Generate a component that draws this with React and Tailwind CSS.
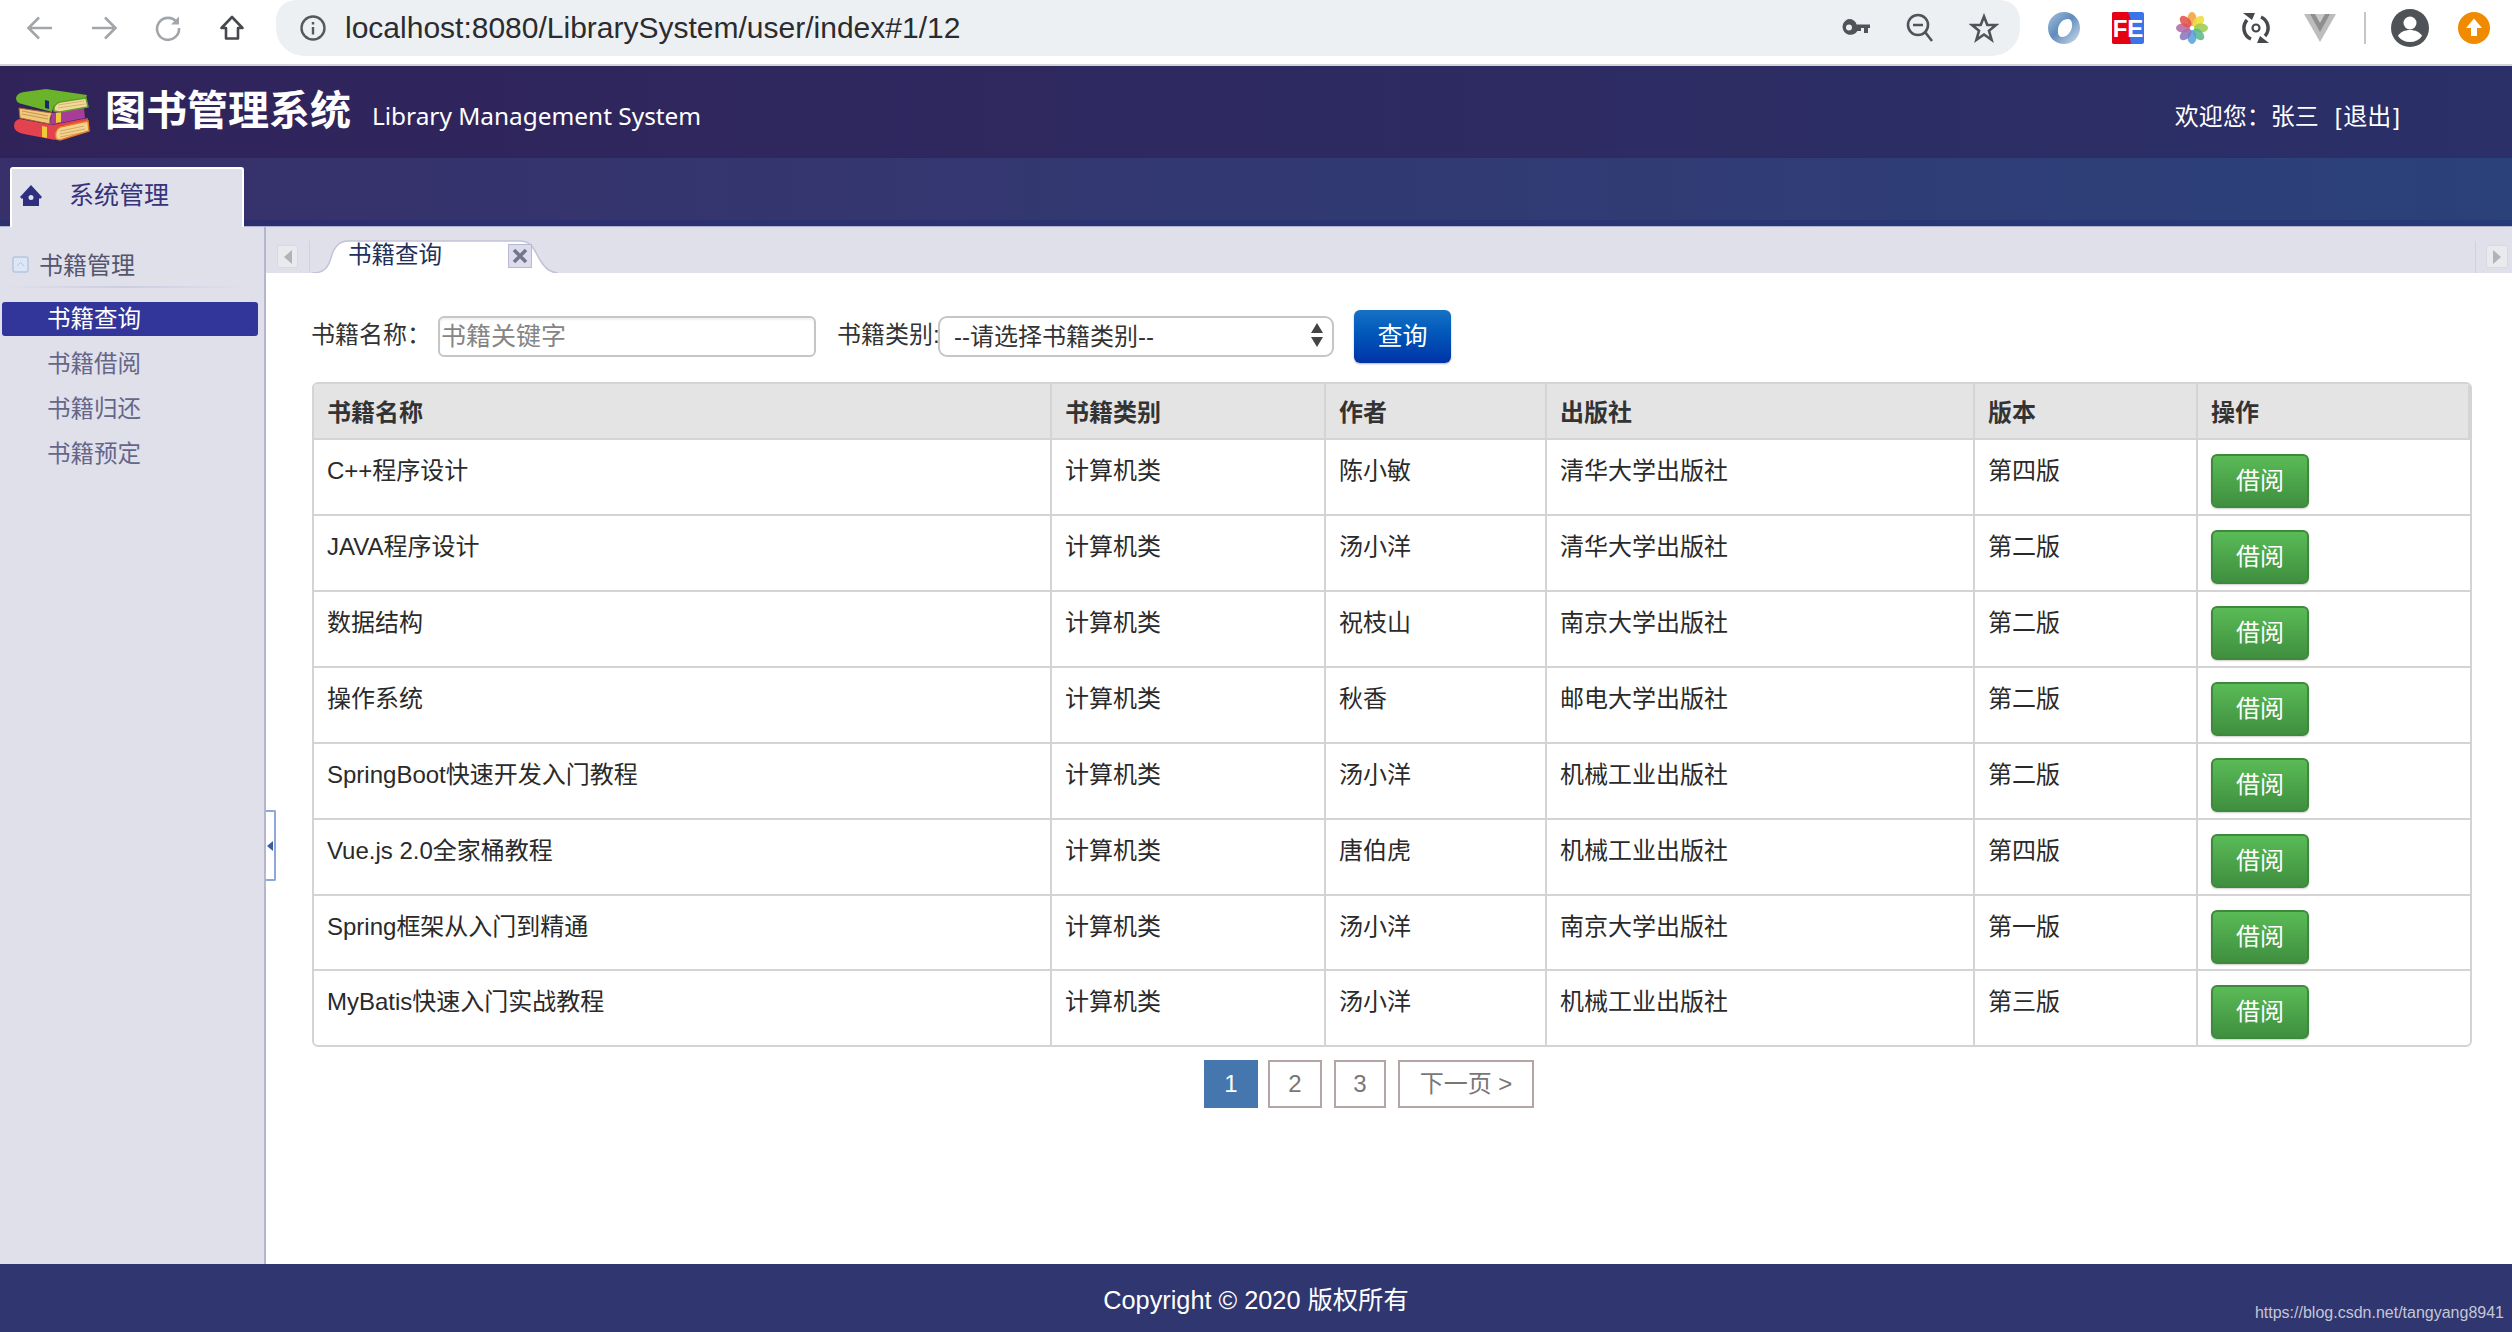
import { useState } from 'react';

const books = [
  { name: 'C++程序设计', type: '计算机类', author: '陈小敏', press: '清华大学出版社', edition: '第四版' },
  { name: 'JAVA程序设计', type: '计算机类', author: '汤小洋', press: '清华大学出版社', edition: '第二版' },
  { name: '数据结构', type: '计算机类', author: '祝枝山', press: '南京大学出版社', edition: '第二版' },
  { name: '操作系统', type: '计算机类', author: '秋香', press: '邮电大学出版社', edition: '第二版' },
  { name: 'SpringBoot快速开发入门教程', type: '计算机类', author: '汤小洋', press: '机械工业出版社', edition: '第二版' },
  { name: 'Vue.js 2.0全家桶教程', type: '计算机类', author: '唐伯虎', press: '机械工业出版社', edition: '第四版' },
  { name: 'Spring框架从入门到精通', type: '计算机类', author: '汤小洋', press: '南京大学出版社', edition: '第一版' },
  { name: 'MyBatis快速入门实战教程', type: '计算机类', author: '汤小洋', press: '机械工业出版社', edition: '第三版' },
];

const menu = ['书籍查询', '书籍借阅', '书籍归还', '书籍预定'];

function ToolIcon({ children }) {
  return <div className="flex h-[56px] w-[64px] shrink-0 items-center justify-center">{children}</div>;
}

function BrowserBar() {
  return (
    <div className="flex h-[66px] shrink-0 items-start border-b-2 border-[#d2d4d8] bg-white pl-[8px]">
      <ToolIcon>
        <svg width="28" height="28" viewBox="0 0 28 28" fill="none" stroke="#a2a6aa" strokeWidth="2.6">
          <path d="M26 14H3M13 3.500 2.500 14 13 24.500" />
        </svg>
      </ToolIcon>
      <ToolIcon>
        <svg width="28" height="28" viewBox="0 0 28 28" fill="none" stroke="#a2a6aa" strokeWidth="2.6">
          <path d="M2 14h23M15 3.500 25.500 14 15 24.500" />
        </svg>
      </ToolIcon>
      <ToolIcon>
        <svg width="28" height="28" viewBox="0 0 28 28" fill="none" stroke="#a2a6aa" strokeWidth="2.6">
          <path d="M23 8.500A11 11 0 1 0 25 14" />
          <path d="M25 2.500V10.500H17Z" fill="#a2a6aa" stroke="none" />
        </svg>
      </ToolIcon>
      <ToolIcon>
        <svg width="28" height="28" viewBox="0 0 28 28" fill="none" stroke="#45484c" strokeWidth="2.6" strokeLinejoin="round">
          <path d="M14 3 3.500 14H8v10.500h12V14h4.500Z" />
        </svg>
      </ToolIcon>

      <div className="ml-[12px] flex h-[56px] w-[1744px] shrink-0 items-center rounded-t-[20px] rounded-b-[28px] bg-[#edf0f2] pl-[24px] pr-[4px]">
        <svg width="26" height="26" viewBox="0 0 26 26" fill="none" stroke="#55585c" strokeWidth="2.4">
          <circle cx="13" cy="13" r="11.500" />
          <path d="M13 12v7.500M13 7v2.500" />
        </svg>
        <span className="ml-[19px] text-[30px] leading-none text-[#2a2c30]">localhost:8080/LibrarySystem/user/index#1/12</span>
        <div className="ml-auto flex">
          <ToolIcon>
            <svg width="30" height="18" viewBox="0 0 30 18" fill="#505357">
              <path fillRule="evenodd" d="M8 0a8 8 0 0 1 7.600 5.500H29V9h-2v5h-4V9h-3v3h-3.600A8 8 0 1 1 8 0Zm0 5.500a3 3 0 1 0 0 6 3 3 0 0 0 0-6Z" />
            </svg>
          </ToolIcon>
          <ToolIcon>
            <svg width="28" height="30" viewBox="0 0 28 30" fill="none" stroke="#505357" strokeWidth="2.600">
              <circle cx="12" cy="12" r="10" />
              <path d="M7 12h10M19 19l7 9" />
            </svg>
          </ToolIcon>
          <ToolIcon>
            <svg width="30" height="30" viewBox="0 0 30 30" fill="none" stroke="#505357" strokeWidth="2.600" strokeLinejoin="miter">
              <path d="M15 3.500 18.300 12H27l-7 5.800 2.600 9L15 21.500 7.400 26.800l2.600-9L3 12h8.700Z" />
            </svg>
          </ToolIcon>
        </div>
      </div>

      <div className="ml-[12px] flex items-center">
        <ToolIcon>
          <svg width="34" height="34" viewBox="0 0 34 34">
            <defs>
              <linearGradient id="ringFill" x1="0" y1="0" x2="1" y2="1">
                <stop offset="0" stopColor="#a9c2dc" />
                <stop offset="0.45" stopColor="#5f8cbc" />
                <stop offset="1" stopColor="#d3deea" />
              </linearGradient>
            </defs>
            <path fillRule="evenodd" fill="url(#ringFill)" d="M17 1c9 0 16 7 16 16s-7 16-16 16S1 26 1 17 8 1 17 1Zm4 7c-5 0-9 4-10 10-.500 5 1 8 4 8 5 0 9-5 10-10 .500-5-1-8-4-8Z" />
          </svg>
        </ToolIcon>
        <ToolIcon>
          <svg width="32" height="32" viewBox="0 0 32 32">
            <rect width="32" height="32" rx="2" fill="#3a74e8" />
            <path d="M2 0h14c3 6 3 11 2 16-1 6 0 11 1 16H2a2 2 0 0 1-2-2V2a2 2 0 0 1 2-2Z" fill="#e60012" />
            <text x="16" y="25" textAnchor="middle" fontFamily="Liberation Sans" fontWeight="700" fontSize="24" fill="#fff">FE</text>
          </svg>
        </ToolIcon>
        <ToolIcon>
          <svg width="32" height="32" viewBox="-16 -16 32 32">
            {['#f4a13c', '#eddc3c', '#9ccc50', '#5fb98a', '#5aa2dc', '#8a78c0', '#b56aa6', '#e2534a'].map((c, i) => (
              <ellipse key={c} cx="0" cy="-9" rx="4.500" ry="7" fill={c} fillOpacity="0.88" transform={`rotate(${i * 45})`} />
            ))}
            <circle r="1.500" fill="#fff" />
          </svg>
        </ToolIcon>
        <ToolIcon>
          <svg width="32" height="32" viewBox="0 0 32 32" fill="none" stroke="#46494c" strokeWidth="3.500">
            <path d="M7 8a12 12 0 0 0 4 19" />
            <path d="M25 24a12 12 0 0 0-4-19" />
            <path d="M3 1h12l-3 7Z" fill="#46494c" stroke="none" />
            <path d="M29 31H17l3-7Z" fill="#46494c" stroke="none" />
            <circle cx="16" cy="16" r="3.500" strokeWidth="2.200" />
          </svg>
        </ToolIcon>
        <ToolIcon>
          <svg width="32" height="28" viewBox="0 0 32 28">
            <path d="M0 0h32L16 28Z" fill="#bdbdbd" />
            <path d="M6 0h20L16 18Z" fill="#8f8f8f" />
            <path d="M11 0h10l-5 9Z" fill="#c9c9c9" />
          </svg>
        </ToolIcon>
        <div className="ml-[12px] h-[32px] w-[2px] bg-[#c4c6c8]" />
        <div className="ml-[12px]">
          <ToolIcon>
            <svg width="38" height="38" viewBox="0 0 38 38">
              <circle cx="19" cy="19" r="19" fill="#4f5256" />
              <circle cx="19" cy="14" r="6.500" fill="#fff" />
              <path d="M7 27c2-4 7-6 12-6s10 2 12 6c-3 4-7 6-12 6s-9-2-12-6Z" fill="#fff" />
            </svg>
          </ToolIcon>
        </div>
        <ToolIcon>
          <svg width="32" height="32" viewBox="0 0 32 32">
            <circle cx="16" cy="16" r="16" fill="#f08a00" />
            <path d="M16 6.500 24 16h-5v8h-6v-8H8Z" fill="#fff" />
          </svg>
        </ToolIcon>
      </div>
    </div>
  );
}

function BookLogo() {
  return (
    <svg width="80" height="58" viewBox="12 6 80 58">
      <path d="M14 46q0-6 6-7l32 6 36-7v4L60 46q-6 2-5 14L24 54q-10-2-10-8Z" fill="#e2434f" />
      <path d="M42 46l5 1v11l-5-1Z" fill="#f2c83a" />
      <path d="M56 59q-2-9 4-12l28-6 1 10-29 9Z" fill="#f2d48f" stroke="#e87a22" strokeWidth="1.500" />
      <path d="M60 51l24-5M60 54l25-5M60 57l25-5" stroke="#c9954e" strokeWidth="0.700" />
      <path d="M52 33l32-5 1 10-35 7Z" fill="#a83d98" />
      <path d="M56 33l5-1v10l-5 1Z" fill="#f2c83a" />
      <path d="M19 28l33 5q-3 5-2 11L20 38Z" fill="#f0c878" stroke="#a8643a" strokeWidth="1" />
      <path d="M22 31l26 5M22 34l26 5" stroke="#b5804a" strokeWidth="0.700" />
      <path d="M16 18q1-5 8-6l22-3 41 6-1 3-26 4q-7 2-8 10L22 24q-6-1-6-6Z" fill="#6cb32c" />
      <path d="M45 20l4 1v8l-4-1Z" fill="#1a2a66" />
      <path d="M54 31q-1-7 6-9l26-4 2 9-28 5Z" fill="#f1d99a" stroke="#5f9e28" strokeWidth="1.500" />
      <path d="M58 25l26-4M58 28l27-4" stroke="#c9a560" strokeWidth="0.700" />
    </svg>
  );
}

function Header() {
  return (
    <div className="flex h-[92px] shrink-0 items-start bg-linear-to-r from-[#30235a] to-[#2b3068] pl-[12px] pt-[20px] text-white">
      <BookLogo />
      <span className="ml-[13px] mt-[-1px] text-[41px] font-bold leading-[52px]">图书管理系统</span>
      <span className="ml-[21px] font-['Noto_Sans',sans-serif] text-[24.400px] leading-[60px]">Library Management System</span>
      <div className="ml-auto mr-[112px] mt-[15px] text-[24px] leading-[32px]">
        欢迎您：张三<span className="ml-[16px]">[</span><span className="mx-[2px]">退出</span>]
      </div>
    </div>
  );
}

function NavBar() {
  return (
    <div className="flex h-[69px] shrink-0 items-end border-b border-[#aeb2cc] bg-linear-to-r from-[#37306a] to-[#2b417a] pl-[10px] shadow-[inset_0_-6px_0_rgba(28,40,120,0.3)]">
      <div className="relative top-px flex h-[60px] w-[234px] items-center rounded-t-[3px] border-x-2 border-t-2 border-white bg-[#e0e0eb] pb-[4px] pl-[7px] text-[#35337a]">
        <svg width="24" height="24" viewBox="0 0 24 24" fill="#2f2f80">
          <path fillRule="evenodd" d="M12 1 23 13l-2 2-1-1v8H4v-8l-1 1-2-2Zm0 10a2.500 2.500 0 1 0 0 5 2.500 2.500 0 0 0 0-5Z" />
        </svg>
        <span className="ml-[26px] text-[25px]">系统管理</span>
      </div>
    </div>
  );
}

function Sidebar() {
  const [active, setActive] = useState(0);
  return (
    <aside className="w-[266px] shrink-0 border-r-2 border-[#b4b6d0] bg-[#e0e0eb] pt-[21px]">
      <div className="flex h-[32px] items-center pl-[12px]">
        <svg width="17" height="17" viewBox="0 0 17 17" fill="#dce6f4" stroke="#b4c6e0" strokeWidth="1.500">
          <rect x="1" y="1" width="15" height="15" rx="2" />
          <path d="M5 10l3.500-3.500L12 10" fill="none" strokeWidth="1" />
        </svg>
        <span className="ml-[10px] pt-[3px] text-[24px] text-[#55556e]">书籍管理</span>
      </div>
      <div className="ml-[5px] mt-[6px] h-[2px] w-[240px] bg-linear-to-r from-transparent via-[#cbcde2] to-transparent" />
      <ul className="mt-[14px]">
        {menu.map((m, i) => (
          <li
            key={m}
            onClick={() => setActive(i)}
            className={`mb-[11px] ml-[2px] flex h-[34px] w-[256px] cursor-pointer items-center rounded-[3px] pl-[45px] pt-[2px] text-[23.500px] ${
              active === i ? 'bg-[#32359a] text-white' : 'text-[#66668a]'
            }`}
          >
            {m}
          </li>
        ))}
      </ul>
    </aside>
  );
}

function TabStrip() {
  return (
    <div className="flex h-[46px] shrink-0 items-end bg-[#e0e0eb]">
      <div className="mb-[5px] ml-[11px] flex h-[23px] w-[21px] items-center justify-center rounded-[2px] border border-[#d8d8e0] bg-[#e9e9ee]">
        <svg width="8" height="14" viewBox="0 0 8 14" fill="#b2b2ba"><path d="M8 0v14L0 7Z" /></svg>
      </div>
      <div className="ml-[11px] h-[32px] w-px bg-[#d0d0de]" />
      <div className="relative ml-[2px] flex h-[33px] w-[246px] items-center">
        <svg className="absolute inset-0" width="246" height="33" viewBox="0 0 246 33">
          <path d="M0 33c12 0 16-5 19-15C22 6 28 1 36 1h172c12 0 14 9 20 19 6 10 12 13 18 13Z" fill="#fff" />
          <path d="M0 33c12 0 16-5 19-15C22 6 28 1 36 1h172c12 0 14 9 20 19 6 10 12 13 18 13" fill="none" stroke="#c2c2da" strokeWidth="1.500" />
        </svg>
        <span className="relative ml-[36px] pb-[1px] text-[23.500px] text-[#22305a]">书籍查询</span>
        <div className="relative mb-[2px] ml-auto mr-[26px] flex h-[24px] w-[24px] items-center justify-center border border-[#b8b8d4] bg-[#dcdcec]">
          <svg width="16" height="16" viewBox="0 0 16 16" stroke="#74748c" strokeWidth="3.500"><path d="M2 2l12 12M14 2 2 14" /></svg>
        </div>
      </div>
      <div className="ml-auto h-[32px] w-px bg-[#d0d0de]" />
      <div className="mb-[5px] ml-[10px] mr-[4px] flex h-[23px] w-[22px] items-center justify-center rounded-[2px] border border-[#d8d8e0] bg-[#e9e9ee]">
        <svg width="8" height="14" viewBox="0 0 8 14" fill="#b2b2ba"><path d="M0 0v14l8-7Z" /></svg>
      </div>
    </div>
  );
}

function SearchBar() {
  return (
    <div className="flex h-[53px] items-center text-[24px] text-[#333]">
      <label className="-ml-px w-[121px] whitespace-nowrap pb-[4px]">书籍名称：</label>
      <input
        placeholder="书籍关键字"
        className="ml-[6px] h-[41px] w-[378px] rounded-[6px] border-2 border-[#c6c6c6] pl-[1px] text-[25px] shadow-[inset_0_2px_2px_rgba(0,0,0,0.06)] outline-none placeholder:text-[#858585]"
      />
      <label className="ml-[21px] w-[101px] whitespace-nowrap pb-[4px]">书籍类别:</label>
      <div className="relative">
        <select className="h-[41px] w-[396px] appearance-none rounded-[9px] border-2 border-[#c6c6c6] bg-white pl-[14px] text-[24px] text-[#333] outline-none">
          <option>--请选择书籍类别--</option>
        </select>
        <svg className="absolute right-[11px] top-[7px]" width="12" height="24" viewBox="0 0 12 24" fill="#444">
          <path d="M6 0l6 10H0ZM6 24 0 14h12Z" />
        </svg>
      </div>
      <button className="ml-[20px] h-[53px] w-[97px] rounded-[6px] bg-linear-to-b from-[#1672c6] to-[#0032a8] text-[25px] text-white shadow-[0_1px_2px_rgba(0,0,0,0.3)]">
        查询
      </button>
    </div>
  );
}

function BookTable() {
  const th = 'border-r-2 border-[#d4d4d4] pl-[13px] pt-[3px] text-left align-middle text-[24px] font-bold text-[#333]';
  const td = 'border-r-2 border-[#d4d4d4] pl-[13px] pt-[15px] align-top text-[24px] leading-[32px] text-[#2a2a2a]';
  const rowHeight = i => (i < 6 ? 'h-[76px]' : i === 6 ? 'h-[75px]' : 'h-[74px]');
  return (
    <div className="mt-[19px] w-[2160px] overflow-hidden rounded-[6px] border-2 border-[#d4d4d4]">
      <table className="w-full table-fixed border-separate border-spacing-0">
        <colgroup>
          <col className="w-[738px]" />
          <col className="w-[274px]" />
          <col className="w-[221px]" />
          <col className="w-[428px]" />
          <col className="w-[223px]" />
          <col className="w-[272px]" />
        </colgroup>
        <thead>
          <tr className="h-[56px] bg-[#e4e4e4]">
            <th className={`${th} border-b-2`}>书籍名称</th>
            <th className={`${th} border-b-2`}>书籍类别</th>
            <th className={`${th} border-b-2`}>作者</th>
            <th className={`${th} border-b-2`}>出版社</th>
            <th className={`${th} border-b-2`}>版本</th>
            <th className={`${th} border-b-2 border-r-0`}>操作</th>
          </tr>
        </thead>
        <tbody>
          {books.map((b, i) => {
            const line = i < books.length - 1 ? 'border-b-2' : '';
            return (
              <tr key={b.name} className={rowHeight(i)}>
                <td className={`${td} ${line}`}>{b.name}</td>
                <td className={`${td} ${line}`}>{b.type}</td>
                <td className={`${td} ${line}`}>{b.author}</td>
                <td className={`${td} ${line}`}>{b.press}</td>
                <td className={`${td} ${line}`}>{b.edition}</td>
                <td className={`${line} border-[#d4d4d4] pl-[13px] pt-[14px] align-top`}>
                  <button className="h-[54px] w-[98px] rounded-[6px] border-2 border-[#3d8a3d] bg-linear-to-b from-[#5abb56] to-[#3f8f3f] text-[24px] text-white shadow-[0_1px_2px_rgba(0,0,0,0.2)]">
                    借阅
                  </button>
                </td>
              </tr>
            );
          })}
        </tbody>
      </table>
    </div>
  );
}

function Pagination() {
  const page = 'flex h-[48px] items-center justify-center border-2 border-[#b5a5a5] text-[24px] text-[#777]';
  return (
    <div className="mt-[13px] flex justify-center pr-[86px]">
      <span className="flex h-[48px] w-[54px] items-center justify-center bg-[#4577ae] text-[24px] text-white">1</span>
      <span className={`${page} ml-[10px] w-[54px]`}>2</span>
      <span className={`${page} ml-[12px] w-[52px]`}>3</span>
      <span className={`${page} ml-[12px] w-[136px]`}>下一页 &gt;</span>
    </div>
  );
}

export default function App() {
  return (
    <div className="flex h-screen w-full flex-col overflow-hidden bg-white font-['Liberation_Sans','Noto_Sans_CJK_SC',sans-serif]">
      <BrowserBar />
      <Header />
      <NavBar />
      <div className="flex min-h-0 flex-1">
        <Sidebar />
        <main className="relative flex min-w-0 flex-1 flex-col">
          <TabStrip />
          <div className="absolute left-0 top-[583px] flex h-[71px] w-[10px] items-center rounded-r-[2px] border-y-2 border-r-2 border-[#8fa8d8] bg-white">
            <svg width="6" height="10" viewBox="0 0 6 10" fill="#3a5f9e" className="ml-[1px]"><path d="M6 0v10L0 5Z" /></svg>
          </div>
          <div className="pl-[46px] pt-[37px]">
            <SearchBar />
            <BookTable />
            <Pagination />
          </div>
        </main>
      </div>
      <footer className="relative flex h-[68px] shrink-0 items-center justify-center bg-[#2f3670] pt-[5px] text-[25.300px] text-white">
        Copyright © 2020 版权所有
        <span className="absolute right-[8px] top-[40px] text-[16px] leading-[18px] text-[#c4c6d4]">https://blog.csdn.net/tangyang8941</span>
      </footer>
    </div>
  );
}
